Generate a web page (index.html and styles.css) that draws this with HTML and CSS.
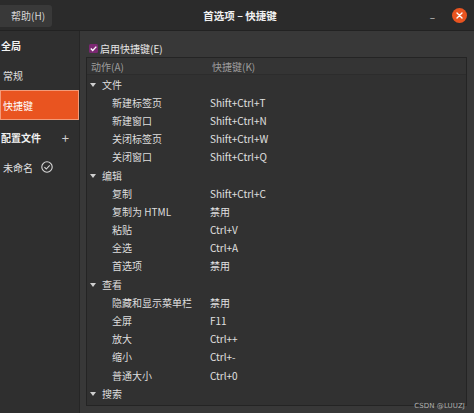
FILE: index.html
```html
<!DOCTYPE html>
<html lang="zh">
<head>
<meta charset="utf-8">
<link rel="stylesheet" href="styles.css">
</head>
<body>
<div class="window">
  <header class="titlebar">
    <div class="tb-left"><span class="help-btn">帮助(H)</span></div>
    <div class="tb-title">首选项 – 快捷键</div>
    <div class="tb-right">
      <span class="minimize">–</span>
      <span class="close">
        <svg width="15" height="15" viewBox="0 0 15 15"><circle cx="7.5" cy="7.5" r="7.5" fill="#e95420"/><path d="M5 5 L10 10 M10 5 L5 10" stroke="#fff" stroke-width="1.4" stroke-linecap="round"/></svg>
      </span>
    </div>
  </header>
  <div class="main">
    <nav class="sidebar">
      <div class="side-head">全局</div>
      <div class="side-item">常规</div>
      <div class="side-item selected">快捷键</div>
      <div class="side-head profile"><span>配置文件</span><span class="plus">+</span></div>
      <div class="side-item unnamed"><span>未命名</span>
        <svg class="check-circle" width="12" height="12" viewBox="0 0 12 12"><circle cx="6" cy="6" r="5.2" fill="none" stroke="#d8d8d8" stroke-width="1.1"/><path d="M3.4 6.1 L5.3 8 L8.7 4.3" fill="none" stroke="#d8d8d8" stroke-width="1.1"/></svg>
      </div>
    </nav>
    <section class="content">
      <label class="enable">
        <span class="checkbox"><svg width="9" height="9" viewBox="0 0 9 9"><path d="M1.8 4.6 L3.7 6.5 L7.3 2.6" fill="none" stroke="#fff" stroke-width="1.4"/></svg></span>
        <span>启用快捷键(E)</span>
      </label>
      <div class="list">
        <div class="list-head"><span class="col-a">动作(A)</span><span class="col-k">快捷键(K)</span></div>
        <div class="row group"><span class="arrow"></span><span>文件</span></div>
        <div class="row"><span class="name">新建标签页</span><span class="key">Shift+Ctrl+T</span></div>
        <div class="row"><span class="name">新建窗口</span><span class="key">Shift+Ctrl+N</span></div>
        <div class="row"><span class="name">关闭标签页</span><span class="key">Shift+Ctrl+W</span></div>
        <div class="row"><span class="name">关闭窗口</span><span class="key">Shift+Ctrl+Q</span></div>
        <div class="row group"><span class="arrow"></span><span>编辑</span></div>
        <div class="row"><span class="name">复制</span><span class="key">Shift+Ctrl+C</span></div>
        <div class="row"><span class="name">复制为 HTML</span><span class="key">禁用</span></div>
        <div class="row"><span class="name">粘贴</span><span class="key">Ctrl+V</span></div>
        <div class="row"><span class="name">全选</span><span class="key">Ctrl+A</span></div>
        <div class="row"><span class="name">首选项</span><span class="key">禁用</span></div>
        <div class="row group"><span class="arrow"></span><span>查看</span></div>
        <div class="row"><span class="name">隐藏和显示菜单栏</span><span class="key">禁用</span></div>
        <div class="row"><span class="name">全屏</span><span class="key">F11</span></div>
        <div class="row"><span class="name">放大</span><span class="key">Ctrl++</span></div>
        <div class="row"><span class="name">缩小</span><span class="key">Ctrl+-</span></div>
        <div class="row"><span class="name">普通大小</span><span class="key">Ctrl+0</span></div>
        <div class="row group"><span class="arrow"></span><span>搜索</span></div>
      </div>
    </section>
  </div>
  <div class="watermark">CSDN @LUUZJ</div>
</div>
</body>
</html>
```

FILE: styles.css
```css
* { box-sizing: border-box; }
html, body { margin: 0; padding: 0; }
body {
  width: 474px;
  height: 413px;
  overflow: hidden;
  background: #383838;
  font-family: "Noto Sans CJK SC", "Noto Sans", sans-serif;
  font-size: 10px;
  color: #dedede;
}
.window {
  position: relative;
  width: 474px;
  height: 413px;
  display: flex;
  flex-direction: column;
}
.titlebar {
  height: 31px;
  flex: none;
  background: #2b2b2b;
  border-bottom: 1px solid #222;
  display: grid;
  grid-template-columns: 1fr auto 1fr;
  align-items: center;
}
.tb-left { display: flex; }
.help-btn {
  width: 52px;
  height: 22px;
  margin-top: 1px;
  background: #393939;
  border-radius: 0 3px 3px 0;
  display: flex;
  align-items: center;
  padding-left: 11px;
  color: #d6d6d6;
  font-size: 10px;
}
.tb-title {
  font-weight: bold;
  color: #f0f0f0;
  font-size: 10.5px;
  padding-left: 6px;
}
.tb-right {
  display: flex;
  justify-content: flex-end;
  align-items: center;
  padding-right: 7px;
}
.minimize {
  color: #cfcfcf;
  font-size: 10px;
  margin-right: 17px;
  margin-top: 2px;
}
.close { display: flex; margin-top: 0; }
.main {
  flex: 1;
  display: flex;
  min-height: 0;
}
.sidebar {
  width: 80px;
  flex: none;
  background: #2f2f2f;
  border-right: 1px solid #262626;
  display: flex;
  flex-direction: column;
}
.side-head {
  height: 29px;
  display: flex;
  align-items: center;
  padding-left: 1px;
  font-weight: bold;
  color: #f2f2f2;
}
.side-item {
  height: 30px;
  display: flex;
  align-items: center;
  padding-left: 3px;
  color: #e0e0e0;
}
.side-item.selected {
  width: 79px;
  background: #e95420;
  border: 1px solid #f39a78;
  padding-left: 2px;
  color: #fff;
}
.side-head.profile {
  margin-top: 2px;
  height: 30px;
  justify-content: space-between;
  padding-right: 10px;
}
.plus {
  font-weight: normal;
  font-size: 13px;
  color: #cfcfcf;
}
.side-item.unnamed { gap: 8px; }
.check-circle { display: block; }
.content {
  flex: 1;
  padding: 9px 7px 7px 6px;
  display: flex;
  flex-direction: column;
}
.enable {
  height: 17px;
  display: flex;
  align-items: center;
  gap: 2px;
  padding-left: 3px;
  color: #e6e6e6;
}
.checkbox {
  width: 9px;
  height: 9px;
  background: #7b2872;
  border-radius: 1.5px;
  display: flex;
}
.list {
  margin-top: 0;
  flex: 1;
  background: #313131;
  border: 1px solid #242424;
  display: flex;
  flex-direction: column;
  overflow: hidden;
}
.list-head {
  height: 17px;
  flex: none;
  background: #343434;
  border-bottom: 1px solid #2c2c2c;
  display: flex;
  align-items: center;
  color: #9d9d9d;
}
.col-a { width: 121px; padding-left: 4px; }
.col-k { padding-left: 4px; }
.row {
  height: 18.2px;
  flex: none;
  display: flex;
  align-items: center;
}
.row.group { padding-left: 3px; }
.arrow {
  width: 0;
  height: 0;
  border-left: 3px solid transparent;
  border-right: 3px solid transparent;
  border-top: 4px solid #d0d0d0;
  margin-right: 6px;
  margin-top: 1px;
}
.name { width: 123px; padding-left: 25px; flex: none; }
.key { color: #e0e0e0; }
.watermark {
  position: absolute;
  right: 9px;
  bottom: 3px;
  font-family: "DejaVu Sans", sans-serif;
  font-size: 7px;
  color: #b0b0b0;
  letter-spacing: 0.1px;
}
```
